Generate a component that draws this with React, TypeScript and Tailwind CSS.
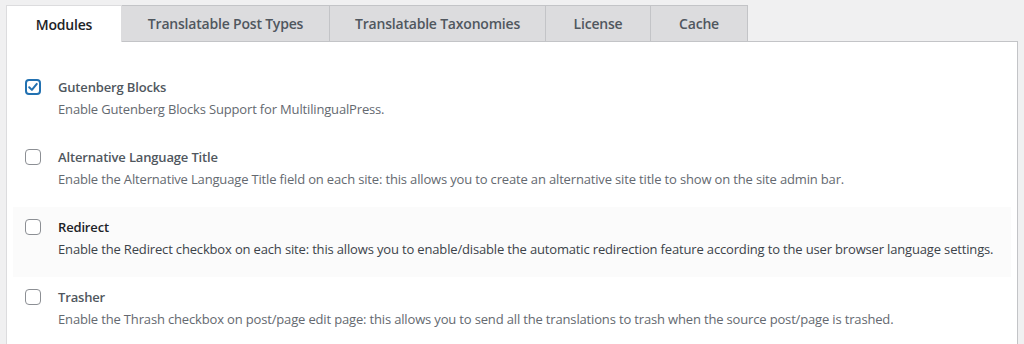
const tabs = [
  { label: 'Modules', width: 'w-[116px]', active: true },
  { label: 'Translatable Post Types', width: 'w-[209px]', active: false },
  { label: 'Translatable Taxonomies', width: 'w-[217px]', active: false },
  { label: 'License', width: 'w-[106px]', active: false },
  { label: 'Cache', width: 'w-[98px]', active: false },
]

const modules = [
  {
    title: 'Gutenberg Blocks',
    description: 'Enable Gutenberg Blocks Support for MultilingualPress.',
    checked: true,
    hover: false,
  },
  {
    title: 'Alternative Language Title',
    description:
      'Enable the Alternative Language Title field on each site: this allows you to create an alternative site title to show on the site admin bar.',
    checked: false,
    hover: false,
  },
  {
    title: 'Redirect',
    description:
      'Enable the Redirect checkbox on each site: this allows you to enable/disable the automatic redirection feature according to the user browser language settings.',
    checked: false,
    hover: true,
  },
  {
    title: 'Trasher',
    description:
      'Enable the Thrash checkbox on post/page edit page: this allows you to send all the translations to trash when the source post/page is trashed.',
    checked: false,
    hover: false,
  },
]

function Checkbox({ checked }: { checked: boolean }) {
  if (checked) {
    return (
      <span className="flex h-4 w-4 shrink-0 items-center justify-center rounded-[4px] border-2 border-[#2271b1] bg-white">
        <svg viewBox="0 0 12 12" className="h-[12px] w-[12px]" fill="none">
          <path d="M2.2 6.3 L4.9 8.9 L9.8 2.9" stroke="#2271b1" strokeWidth="2" strokeLinecap="round" strokeLinejoin="round" />
        </svg>
      </span>
    )
  }
  return <span className="block h-4 w-4 shrink-0 rounded-[4px] border border-[#8c8f94] bg-white" />
}

export default function App() {
  return (
    <div className="h-[344px] w-[1024px] overflow-hidden bg-[#f0f0f1] pl-[6px] pr-[6px] pt-[5px] font-['Open_Sans',sans-serif]">
      <div className="flex h-[36px] items-stretch">
        {tabs.map((tab) =>
          tab.active ? (
            <div
              key={tab.label}
              className={`${tab.width} relative z-10 -mb-px flex items-center justify-center border border-b-0 border-[#dcdcde] bg-white text-[14px] font-semibold tracking-[-0.2px] text-[#1d2327]`}
            >
              {tab.label}
            </div>
          ) : (
            <div
              key={tab.label}
              className={`${tab.width} -ml-px flex items-center justify-center border border-b-0 border-[#c3c4c7] bg-[#dcdcde] text-[14px] font-semibold tracking-[-0.2px] text-[#50575e]`}
            >
              {tab.label}
            </div>
          )
        )}
      </div>
      <div className="h-[340px] border border-[#c3c4c7] border-l-[#dcdcde] bg-white px-[6px] pt-[25px]">
        {modules.map((m) => (
          <div
            key={m.title}
            className={`flex h-[70px] gap-[17px] px-3 pt-[10px] ${m.hover ? 'bg-[#fbfbfb]' : ''}`}
          >
            <div className="flex h-5 items-center">
              <Checkbox checked={m.checked} />
            </div>
            <div className="text-[13px] leading-5 tracking-[-0.16px]">
              <div className={`font-semibold ${m.hover ? 'text-[#1d2327]' : 'text-[#50575e]'}`}>{m.title}</div>
              <div className={`mt-[2px] whitespace-nowrap ${m.hover ? 'text-[#3c434a]' : 'text-[#646970]'}`}>{m.description}</div>
            </div>
          </div>
        ))}
      </div>
    </div>
  )
}
